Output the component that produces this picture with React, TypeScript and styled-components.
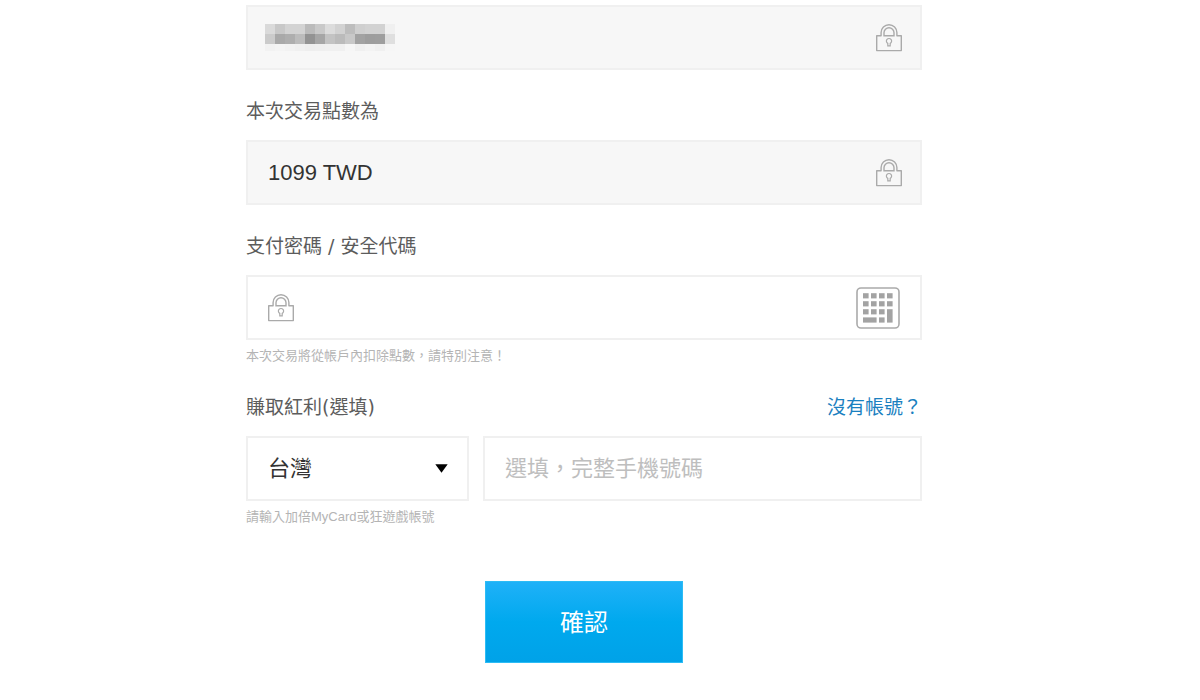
import React from "react";
import styled, { createGlobalStyle } from "styled-components";

const GlobalStyle = createGlobalStyle`
  *, *::before, *::after { box-sizing: border-box; }
  body {
    margin: 0;
    background: #fff;
    color: #333;
    font-family: "Liberation Sans", "Noto Sans CJK TC", sans-serif;
  }
  input, select, button { font-family: inherit; }
`;

const Page = styled.main`
  display: flex;
  justify-content: center;
  padding: 5px 32px 36px 0;
`;

const Form = styled.form`
  display: flex;
  flex-direction: column;
  width: 100%;
  max-width: 676px;
`;

const LabelRow = styled.div`
  display: flex;
  justify-content: space-between;
  height: 70px;
  padding-top: 12px;
  font-family: "DejaVu Sans", "Noto Sans CJK TC", sans-serif;
  font-size: 19px;
  line-height: 58px;
`;

const Label = styled.label`
  color: #5c5c5c;
`;

const HelpLink = styled.a`
  color: #1a80c0;
  text-decoration: none;
`;

const Field = styled.div<{ $locked?: boolean; $grow?: string }>`
  position: relative;
  display: flex;
  align-items: center;
  flex: ${(p) => p.$grow ?? "none"};
  min-width: 0;
  height: 65px;
  padding-right: ${(p) => (p.$locked ? "17px" : "0")};
  border: 2px solid #f0f0f0;
  background: ${(p) => (p.$locked ? "#f7f7f7" : "#fff")};
`;

const TextInput = styled.input`
  flex: 1;
  min-width: 0;
  height: 100%;
  padding: 0 20px;
  border: 0;
  outline: 0;
  background: transparent;
  color: #333;
  font-size: 22px;

  &::placeholder {
    color: #bebebe;
    opacity: 1;
  }
`;

const Select = styled.select`
  width: 100%;
  height: 100%;
  padding: 0 48px 0 20px;
  border: 0;
  outline: 0;
  appearance: none;
  background: transparent;
  color: #333;
  font-size: 22px;
`;

const Caret = styled.svg`
  position: absolute;
  right: 19px;
  pointer-events: none;
`;

const Masked = styled.div`
  flex: 1;
  padding-left: 17px;
  line-height: 0;
`;

const LeadingIcon = styled.span`
  display: flex;
  padding-left: 19px;
`;

const KeypadButton = styled.button`
  display: flex;
  margin-right: 20px;
  padding: 0;
  border: 0;
  background: none;
  cursor: pointer;
`;

const Hint = styled.p`
  height: 26px;
  margin: 0;
  padding-top: 6px;
  color: #b4b4b4;
  font-size: 13px;
  line-height: 20px;
`;

const FieldRow = styled.div`
  display: flex;
  gap: 14px;
`;

const Submit = styled.button`
  align-self: center;
  width: 198px;
  height: 82px;
  margin-top: 54px;
  padding: 0 0 4px;
  border: 1px solid #2cbcf5;
  background: linear-gradient(#1fb1f8, #00a9ee 50%, #00a2e8);
  color: #fff;
  font-size: 24px;
  cursor: pointer;
`;

const LockIcon = () => (
  <svg width="28" height="30" viewBox="0 0 28 30" fill="none" stroke="#aaa" strokeWidth="1.4" aria-hidden="true">
    <path d="M6.1 12.8H1.7V27.6H26.3V12.8H21.9V9.6a7.9 7.9 0 0 0-15.8 0Z" strokeLinejoin="round" />
    <path d="M9 12.8V9.8a5 5 0 0 1 10 0V12.8Z" />
    <path d="M12.8 20.4a2.6 2.6 0 1 1 2.4 0V22.9h-2.4Z" strokeWidth="1.2" />
  </svg>
);

const keys = [0, 1, 2].flatMap((row) =>
  [0, 1, 2, 3].filter((col) => row < 2 || col < 3).map((col) => ({ x: 7 + col * 8, y: 6 + row * 8 }))
);

const KeypadIcon = () => (
  <svg width="44" height="42" viewBox="0 0 44 42" aria-hidden="true">
    <rect x="1" y="1" width="42" height="40" rx="4" fill="#fff" stroke="#aaa" strokeWidth="1.6" />
    <g fill="#a3a3a3">
      {keys.map((k) => (
        <rect key={`${k.x}-${k.y}`} x={k.x} y={k.y + 0.2} width="5.6" height="5.2" />
      ))}
      <rect x="7" y="30.4" width="13.6" height="5.2" />
      <rect x="23" y="30.4" width="5.6" height="5.2" />
      <rect x="31" y="22.2" width="5.6" height="13.4" />
    </g>
  </svg>
);

const mosaic = [
  ["da", "c8", "d3", "d3", "bb", "c9", "dc", "d2", "bd", "cf", "d2", "d2", "f0"],
  ["cb", "a9", "ae", "bc", "93", "a6", "c3", "bb", "c8", "a2", "9d", "9e", "df"],
  ["f2", "f4", "f2", "f0", "ee", "ef", "f0", "f0", "f6", "f0", "f3", "f0", "f6"],
];

const Mosaic = () => (
  <svg width="130" height="27" viewBox="0 0 130 27" role="img" aria-label="已隱藏的帳號" shapeRendering="crispEdges">
    {mosaic.map((row, y) =>
      row.map((c, x) => (
        <rect key={`${x}-${y}`} x={x * 10} y={y * 10} width="10" height={y === 2 ? 7 : 10} fill={`#${c}${c}${c}`} />
      ))
    )}
  </svg>
);

export default function App() {
  return (
    <>
      <GlobalStyle />
      <Page lang="zh-Hant">
        <Form onSubmit={(e) => e.preventDefault()}>
          <Field $locked>
            <Masked>
              <Mosaic />
            </Masked>
            <LockIcon />
          </Field>

          <LabelRow>
            <Label htmlFor="amount">本次交易點數為</Label>
          </LabelRow>
          <Field $locked>
            <TextInput id="amount" readOnly value="1099 TWD" />
            <LockIcon />
          </Field>

          <LabelRow>
            <Label htmlFor="pin">支付密碼 / 安全代碼</Label>
          </LabelRow>
          <Field>
            <LeadingIcon>
              <LockIcon />
            </LeadingIcon>
            <TextInput id="pin" type="password" />
            <KeypadButton type="button" aria-label="螢幕鍵盤">
              <KeypadIcon />
            </KeypadButton>
          </Field>
          <Hint>本次交易將從帳戶內扣除點數，請特別注意！</Hint>

          <LabelRow>
            <Label htmlFor="phone">賺取紅利(選填)</Label>
            <HelpLink href="#">沒有帳號？</HelpLink>
          </LabelRow>
          <FieldRow>
            <Field $grow="0 0 33%">
              <Select aria-label="國家" defaultValue="tw">
                <option value="tw">台灣</option>
              </Select>
              <Caret width="13" height="9" viewBox="0 0 13 9" aria-hidden="true">
                <path d="M0.3 0.3H12.7L6.5 8.7Z" />
              </Caret>
            </Field>
            <Field $grow="1">
              <TextInput id="phone" type="tel" placeholder="選填，完整手機號碼" />
            </Field>
          </FieldRow>
          <Hint>請輸入加倍MyCard或狂遊戲帳號</Hint>

          <Submit type="submit">確認</Submit>
        </Form>
      </Page>
    </>
  );
}
